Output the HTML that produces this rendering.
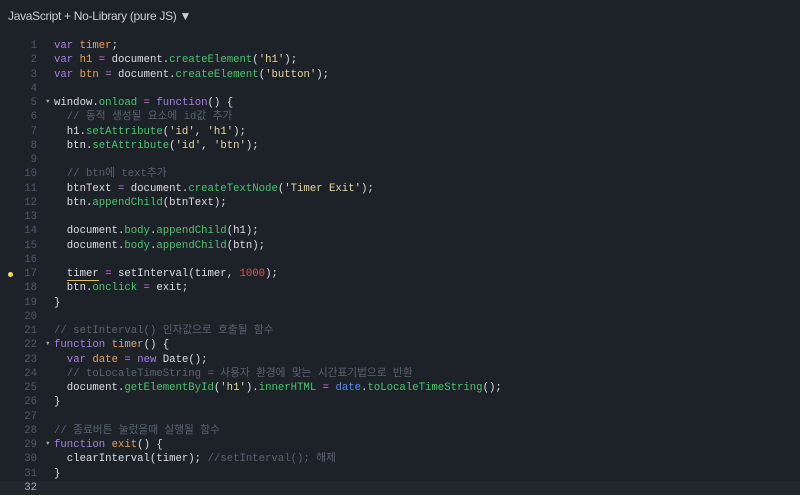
<!DOCTYPE html>
<html><head><meta charset="utf-8"><style>
body{margin:0;width:800px;height:494px;background:#1d2128;overflow:hidden;font-family:"Liberation Mono","Noto Sans CJK KR",monospace;}
.top{position:absolute;left:8px;top:9px;font:12px "Liberation Sans",sans-serif;color:#c9ccd2;letter-spacing:-0.3px}
.code{position:absolute;left:0;top:39px;width:800px;font-size:10.67px;line-height:14.26px;color:#dcdfe4}
.l{position:relative;height:14.26px;white-space:pre}
.n{position:absolute;left:0;width:37px;text-align:right;color:#525966}
.t{position:absolute;left:54px}
.f{position:absolute;left:46px;top:-1px;color:#9aa0aa;font-size:6px}
.cur{background:#22262d}
.cur .n{color:#a3a9b3}
.dot{position:absolute;left:8px;top:5px;width:5px;height:5px;border-radius:50%;background:#f0dd5a}
.k{color:#a67fe0}.v{color:#e8a15a}.o{color:#c678dd}.g{color:#4cc46f}.s{color:#e4d7a3}.c{color:#5b6270}.num{color:#e0524f}.b{color:#5a8de8}
u{text-decoration:none;border-bottom:1px solid #e5c45a}
</style></head><body>
<div class="top">JavaScript + No-Library (pure JS) ▼</div>
<div class="code">
<div class="l"><span class="n">1</span><span class="t"><span class="k">var</span> <span class="v">timer</span>;</span></div>
<div class="l"><span class="n">2</span><span class="t"><span class="k">var</span> <span class="v">h1</span> <span class="o">=</span> document.<span class="g">createElement</span>(<span class="s">'h1'</span>);</span></div>
<div class="l"><span class="n">3</span><span class="t"><span class="k">var</span> <span class="v">btn</span> <span class="o">=</span> document.<span class="g">createElement</span>(<span class="s">'button'</span>);</span></div>
<div class="l"><span class="n">4</span></div>
<div class="l"><span class="n">5</span><span class="f">▼</span><span class="t">window.<span class="g">onload</span> <span class="o">=</span> <span class="k">function</span>() {</span></div>
<div class="l"><span class="n">6</span><span class="t"><span class="c">  // 동적 생성될 요소에 id값 추가</span></span></div>
<div class="l"><span class="n">7</span><span class="t">  h1.<span class="g">setAttribute</span>(<span class="s">'id'</span>, <span class="s">'h1'</span>);</span></div>
<div class="l"><span class="n">8</span><span class="t">  btn.<span class="g">setAttribute</span>(<span class="s">'id'</span>, <span class="s">'btn'</span>);</span></div>
<div class="l"><span class="n">9</span></div>
<div class="l"><span class="n">10</span><span class="t"><span class="c">  // btn에 text추가</span></span></div>
<div class="l"><span class="n">11</span><span class="t">  btnText <span class="o">=</span> document.<span class="g">createTextNode</span>(<span class="s">'Timer Exit'</span>);</span></div>
<div class="l"><span class="n">12</span><span class="t">  btn.<span class="g">appendChild</span>(btnText);</span></div>
<div class="l"><span class="n">13</span></div>
<div class="l"><span class="n">14</span><span class="t">  document.<span class="g">body</span>.<span class="g">appendChild</span>(h1);</span></div>
<div class="l"><span class="n">15</span><span class="t">  document.<span class="g">body</span>.<span class="g">appendChild</span>(btn);</span></div>
<div class="l"><span class="n">16</span></div>
<div class="l"><span class="dot"></span><span class="n">17</span><span class="t">  <u>timer</u> <span class="o">=</span> setInterval(timer, <span class="num">1000</span>);</span></div>
<div class="l"><span class="n">18</span><span class="t">  btn.<span class="g">onclick</span> <span class="o">=</span> exit;</span></div>
<div class="l"><span class="n">19</span><span class="t">}</span></div>
<div class="l"><span class="n">20</span></div>
<div class="l"><span class="n">21</span><span class="t"><span class="c">// setInterval() 인자값으로 호출될 함수</span></span></div>
<div class="l"><span class="n">22</span><span class="f">▼</span><span class="t"><span class="k">function</span> <span class="v">timer</span>() {</span></div>
<div class="l"><span class="n">23</span><span class="t">  <span class="k">var</span> <span class="v">date</span> <span class="o">=</span> <span class="k">new</span> Date();</span></div>
<div class="l"><span class="n">24</span><span class="t"><span class="c">  // toLocaleTimeString = 사용자 환경에 맞는 시간표기법으로 반환</span></span></div>
<div class="l"><span class="n">25</span><span class="t">  document.<span class="g">getElementById</span>(<span class="s">'h1'</span>).<span class="g">innerHTML</span> <span class="o">=</span> <span class="b">date</span>.<span class="g">toLocaleTimeString</span>();</span></div>
<div class="l"><span class="n">26</span><span class="t">}</span></div>
<div class="l"><span class="n">27</span></div>
<div class="l"><span class="n">28</span><span class="t"><span class="c">// 종료버튼 눌렀을때 실행될 함수</span></span></div>
<div class="l"><span class="n">29</span><span class="f">▼</span><span class="t"><span class="k">function</span> <span class="v">exit</span>() {</span></div>
<div class="l"><span class="n">30</span><span class="t">  clearInterval(timer); <span class="c">//setInterval(); 해제</span></span></div>
<div class="l"><span class="n">31</span><span class="t">}</span></div>
<div class="l cur"><span class="n">32</span></div>
</div>
</body></html>
